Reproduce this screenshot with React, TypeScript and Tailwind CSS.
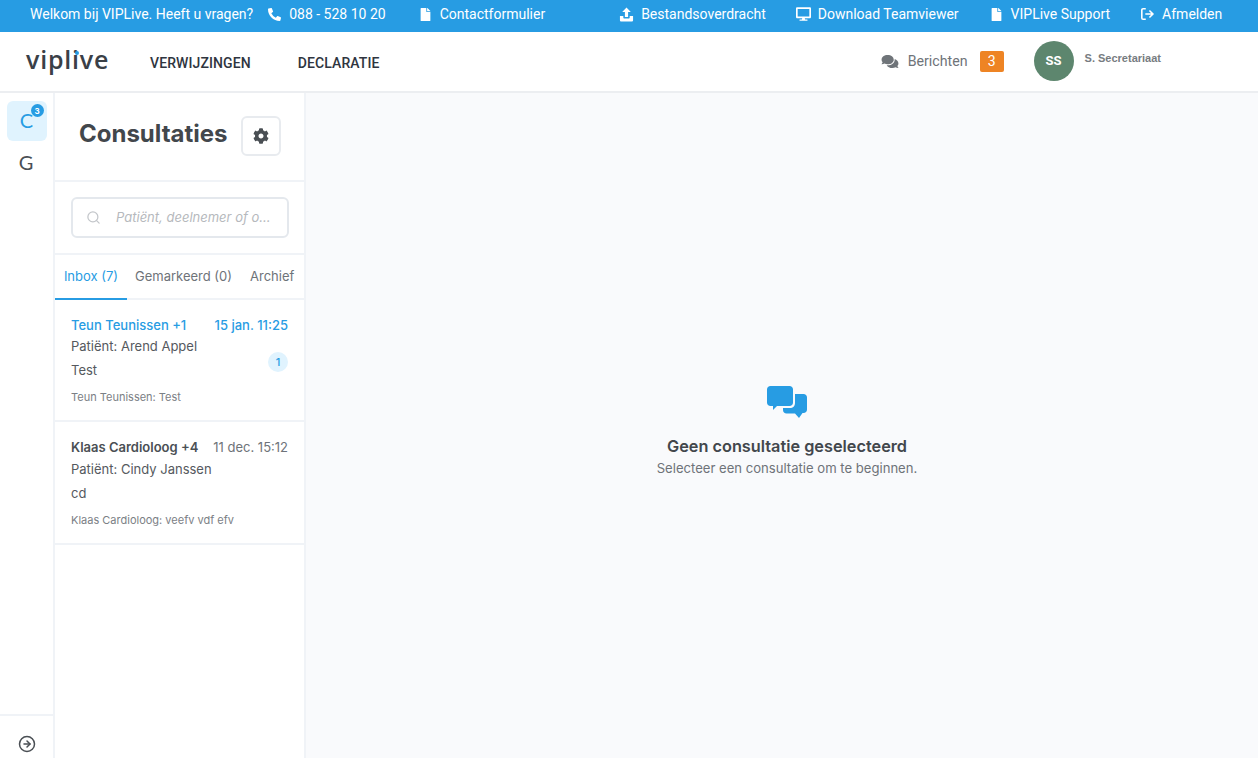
import { FaPhoneAlt, FaFile, FaDesktop, FaCog, FaComments } from "react-icons/fa";
import { FiSearch, FiArrowRightCircle } from "react-icons/fi";

const UploadIcon = () => (
  <svg viewBox="0 0 16 16" className="w-[15px] h-[15px]" fill="white">
    <path d="M8 0.5 L12.6 5.4 H9.7 V10.6 H6.3 V5.4 H3.4 Z" />
    <path d="M1 9.6 H4.6 V11.2 C4.6 11.9 5.1 12.3 5.8 12.3 H10.2 C10.9 12.3 11.4 11.9 11.4 11.2 V9.6 H15 V14 C15 14.9 14.4 15.5 13.5 15.5 H2.5 C1.6 15.5 1 14.9 1 14 Z" />
  </svg>
);

const SignOutIcon = () => (
  <svg viewBox="0 0 16 16" className="w-[15px] h-[14px]" fill="none" stroke="white" strokeWidth="1.8">
    <path d="M6 2 H3 C2 2 1.5 2.5 1.5 3.5 V12.5 C1.5 13.5 2 14 3 14 H6" />
    <path d="M5.5 8 H14 M10.2 4 L14.2 8 L10.2 12" />
  </svg>
);

const TopLink = ({ icon, label, className }: { icon: React.ReactNode; label: string; className: string }) => (
  <div className={`flex items-center ${className}`}>
    <span className="flex w-[15px] justify-center">{icon}</span>
    <span className="ml-[7px]">{label}</span>
  </div>
);

const ConversationRow = ({
  name,
  time,
  patient,
  subject,
  preview,
  unread,
  active,
}: {
  name: string;
  time: string;
  patient: string;
  subject: string;
  preview: string;
  unread?: number;
  active?: boolean;
}) => (
  <div className={`relative border-b-2 border-[#f0f3f7] px-4 pt-[15px] ${active ? "h-[122px]" : "h-[123px]"}`}>
    <div className={`flex justify-between text-[13px] leading-[20px] ${active ? "text-[#279ce3] font-medium" : "text-[#4a4f54]"}`}>
      <span className={active ? "" : "font-semibold"}>{name}</span>
      <span className={active ? "" : "text-[#6e7379]"}>{time}</span>
    </div>
    <div className={`text-[13px] leading-[24px] text-[#55595e] ${active ? "-mt-px" : ""}`}>{patient}</div>
    <div className="text-[13px] leading-[24px] text-[#55595e]">{subject}</div>
    <div className="text-[11px] leading-[16px] text-[#7b8085] mt-[7px]">{preview}</div>
    {unread ? (
      <span className="absolute right-4 top-[52px] flex h-5 w-5 items-center justify-center rounded-full bg-[#e0f3fe] text-[11px] font-medium text-[#279ce3]">
        {unread}
      </span>
    ) : null}
  </div>
);

export default function App() {
  return (
    <div className="flex h-[758px] w-[1258px] flex-col overflow-hidden bg-white font-['Inter',sans-serif]">
      {/* top bar */}
      <div className="flex h-8 shrink-0 items-center bg-[#279ce3] pb-1 pl-[30px] font-['Roboto',sans-serif] text-[14px] text-white">
        <span>Welkom bij VIPLive. Heeft u vragen?</span>
        <TopLink className="ml-[14px]" icon={<FaPhoneAlt className="w-[13px] h-[13px]" />} label="088 - 528 10 20" />
        <TopLink className="ml-[32px]" icon={<FaFile className="w-[11px] h-[13px]" />} label="Contactformulier" />
        <TopLink className="ml-[74px]" icon={<UploadIcon />} label="Bestandsoverdracht" />
        <TopLink className="ml-[30px]" icon={<FaDesktop className="w-[15px] h-[14px]" />} label="Download Teamviewer" />
        <TopLink className="ml-[30px]" icon={<FaFile className="w-[11px] h-[13px]" />} label="VIPLive Support" />
        <TopLink className="ml-[30px]" icon={<SignOutIcon />} label="Afmelden" />
      </div>

      {/* nav */}
      <div className="flex h-[61px] shrink-0 items-center border-b-2 border-[#eceef1] pl-[26px]">
        <div className="relative -mt-[4px] w-[124px] font-['Open_Sans',sans-serif] text-[25px] font-semibold leading-none tracking-[0.8px] text-[#3a4047]">
          viplive
          <span className="absolute left-[49px] top-[4px] h-[4px] w-[4px] rounded-full bg-[#279ce3]" />
        </div>
        <span className="mt-[3px] font-['Roboto',sans-serif] text-[14px] font-medium tracking-[0.1px] text-[#2f3540]">VERWIJZINGEN</span>
        <span className="ml-[47px] mt-[3px] font-['Roboto',sans-serif] text-[14px] font-medium tracking-[0.1px] text-[#2f3540]">DECLARATIE</span>
        <div className="ml-auto flex items-center font-['Roboto',sans-serif]">
          <FaComments className="h-[15px] w-[18px] text-[#6f7479]" />
          <span className="ml-[9px] text-[14.2px] text-[#6f7479]">Berichten</span>
          <span className="ml-[12px] flex h-[21px] w-[24px] items-center justify-center rounded-[2px] bg-[#ee8424] text-[14px] text-white">3</span>
          <span className="mb-[2px] ml-[30px] flex h-10 w-10 items-center justify-center rounded-full bg-[#5d866e] text-[13px] font-bold text-white">SS</span>
          <span className="mb-[6px] ml-[11px] mr-[97px] font-['Liberation_Sans',sans-serif] text-[11px] font-bold text-[#777c81]">S. Secretariaat</span>
        </div>
      </div>

      <div className="flex min-h-0 flex-1">
        {/* icon rail */}
        <div className="flex w-[55px] shrink-0 flex-col border-r-2 border-[#f0f3f7]">
          <div className="flex flex-col items-center pt-2">
            <div className="relative flex h-10 w-10 items-center justify-center rounded-[6px] bg-[#e0f3fe] pb-[2px] font-['Lato',sans-serif] text-[20px] text-[#279ce3]">
              C
              <span className="absolute right-[3px] top-[3px] flex h-[13px] w-[13px] items-center justify-center rounded-full bg-[#279ce3] font-['Inter',sans-serif] text-[8px] font-bold text-white">3</span>
            </div>
            <div className="mt-[2px] flex h-10 w-10 items-center justify-center pb-[2px] pr-px font-['Lato',sans-serif] text-[20px] text-[#4a4f54]">G</div>
          </div>
          <div className="mt-auto flex h-[44px] items-start justify-center border-t-2 border-[#f0f3f7] pt-[19px]">
            <FiArrowRightCircle className="h-[18px] w-[18px] text-[#4a4f54]" />
          </div>
        </div>

        {/* list */}
        <div className="flex w-[251px] shrink-0 flex-col border-r-2 border-[#f0f3f7]">
          <div className="flex h-[89px] shrink-0 items-start border-b-2 border-[#f0f3f7] pl-6">
            <h1 className="mt-[25px] text-[24px] font-bold leading-[32px] text-[#42474c]">Consultaties</h1>
            <button className="ml-[13px] mt-[23px] flex h-10 w-10 items-center justify-center rounded-[6px] border-2 border-[#e8ebef]">
              <FaCog className="h-4 w-4 text-[#4a4f54]" />
            </button>
          </div>
          <div className="h-[73px] shrink-0 border-b-2 border-[#f0f3f7] pl-4 pt-[15px]">
            <div className="flex h-[41px] w-[218px] items-center rounded-[6px] border-2 border-[#e4e8ed] pl-[13px]">
              <FiSearch className="h-[15px] w-[15px] text-[#c3c6ca]" />
              <span className="ml-[15px] text-[13px] italic text-[#b6b9bd]">Patiënt, deelnemer of o...</span>
            </div>
          </div>
          <div className="flex h-[45px] shrink-0 items-start border-b-2 border-[#f0f3f7] text-[13px] text-[#6e7379]">
            <div className="flex h-[45px] w-[72px] items-center justify-center border-b-2 border-[#279ce3] text-[#279ce3]">Inbox (7)</div>
            <span className="ml-2 flex h-[43px] items-center">Gemarkeerd (0)</span>
            <span className="ml-[18px] flex h-[43px] items-center">Archief</span>
          </div>
          <ConversationRow active name="Teun Teunissen +1" time="15 jan. 11:25" patient="Patiënt: Arend Appel" subject="Test" preview="Teun Teunissen: Test" unread={1} />
          <ConversationRow name="Klaas Cardioloog +4" time="11 dec. 15:12" patient="Patiënt: Cindy Janssen" subject="cd" preview="Klaas Cardioloog: veefv vdf efv" />
        </div>

        {/* empty state */}
        <div className="flex flex-1 flex-col items-center bg-[#f9fafc] pl-[10px] pt-[293px]">
          <svg viewBox="0 0 40 32" className="h-[32px] w-[40px]" fill="#279ce3">
            <path d="M3.5 0 H22.5 C24.5 0 26 1.5 26 3.5 V16.5 C26 18.5 24.5 20 22.5 20 H10 L6 24 V20 H3.5 C1.5 20 0 18.5 0 16.5 V3.5 C0 1.5 1.5 0 3.5 0 Z" />
            <path d="M28 8 H36.5 C38.5 8 40 9.5 40 11.5 V23.5 C40 25.5 38.5 27 36.5 27 H35.5 L32 32 L28 27.5 H19.5 C17.5 27.5 16 26 16 24 V22 H23 C26 22 28 20 28 17 Z" />
          </svg>
          <div className="mt-4 text-[16.3px] font-semibold leading-[24px] text-[#42474c]">Geen consultatie geselecteerd</div>
          <div className="text-[13.1px] leading-[20px] text-[#6e7379]">Selecteer een consultatie om te beginnen.</div>
        </div>
      </div>
    </div>
  );
}
